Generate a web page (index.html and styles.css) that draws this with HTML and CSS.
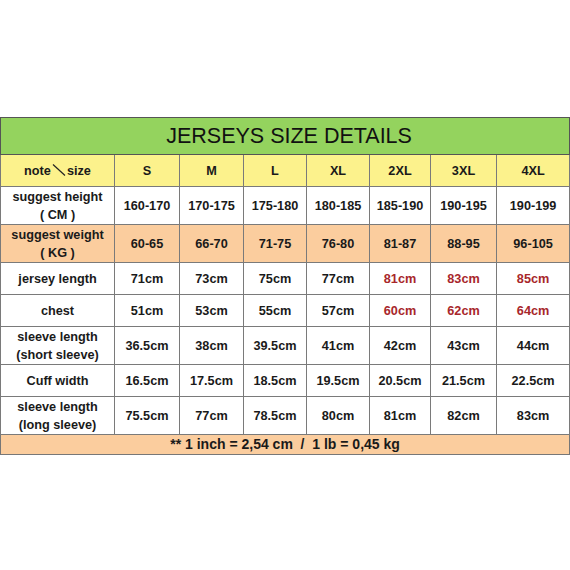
FILE: index.html
```html
<!DOCTYPE html>
<html>
<head>
<meta charset="utf-8">
<link rel="stylesheet" href="styles.css">
</head>
<body>
<div class="page">
<table class="sizes">
  <colgroup>
    <col class="c0"><col class="c1"><col class="c2"><col class="c3"><col class="c4"><col class="c5"><col class="c6"><col class="c7">
  </colgroup>
  <tr class="title"><td colspan="8">JERSEYS SIZE DETAILS</td></tr>
  <tr class="head">
    <td>note<svg class="slash" width="14" height="12" viewBox="0 0 14 12"><line x1="1" y1="0.5" x2="13" y2="11.5" stroke="#222" stroke-width="1.2"/></svg>size</td>
    <td>S</td><td>M</td><td>L</td><td>XL</td><td>2XL</td><td>3XL</td><td>4XL</td>
  </tr>
  <tr class="tall">
    <td>suggest height<br>( CM )</td>
    <td>160-170</td><td>170-175</td><td>175-180</td><td>180-185</td><td>185-190</td><td>190-195</td><td>190-199</td>
  </tr>
  <tr class="tall peach">
    <td>suggest weight<br>( KG )</td>
    <td>60-65</td><td>66-70</td><td>71-75</td><td>76-80</td><td>81-87</td><td>88-95</td><td>96-105</td>
  </tr>
  <tr class="short">
    <td>jersey length</td>
    <td>71cm</td><td>73cm</td><td>75cm</td><td>77cm</td><td class="red">81cm</td><td class="red">83cm</td><td class="red">85cm</td>
  </tr>
  <tr class="short">
    <td>chest</td>
    <td>51cm</td><td>53cm</td><td>55cm</td><td>57cm</td><td class="red">60cm</td><td class="red">62cm</td><td class="red">64cm</td>
  </tr>
  <tr class="tall">
    <td>sleeve length<br>(short sleeve)</td>
    <td>36.5cm</td><td>38cm</td><td>39.5cm</td><td>41cm</td><td>42cm</td><td>43cm</td><td>44cm</td>
  </tr>
  <tr class="short">
    <td>Cuff width</td>
    <td>16.5cm</td><td>17.5cm</td><td>18.5cm</td><td>19.5cm</td><td>20.5cm</td><td>21.5cm</td><td>22.5cm</td>
  </tr>
  <tr class="tall">
    <td>sleeve length<br>(long sleeve)</td>
    <td>75.5cm</td><td>77cm</td><td>78.5cm</td><td>80cm</td><td>81cm</td><td>82cm</td><td>83cm</td>
  </tr>
  <tr class="foot"><td colspan="8">** 1 inch = 2,54 cm &nbsp;/&nbsp; 1 lb = 0,45 kg</td></tr>
</table>
</div>
</body>
</html>
```
FILE: styles.css
```css
html, body {
  margin: 0;
  padding: 0;
  background: #ffffff;
}
.page {
  padding-top: 117px;
  padding-left: 0;
  width: 570px;
  height: 453px;
}
.sizes {
  border-collapse: collapse;
  table-layout: fixed;
  width: 569px;
  font-family: "Liberation Sans", Arial, sans-serif;
  font-weight: bold;
  font-size: 12.7px;
  color: #1a1a1a;
}
.c0 { width: 114px; }
.c1 { width: 65px; }
.c2 { width: 64px; }
.c3 { width: 63px; }
.c4 { width: 63px; }
.c5 { width: 61px; }
.c6 { width: 66px; }
.c7 { width: 73px; }
.sizes td {
  border: 1px solid #7a7a7a;
  text-align: center;
  vertical-align: middle;
  padding: 0;
  line-height: 18px;
  background: #ffffff;
}
.sizes tr.title td {
  background: #94d35e;
  height: 36px;
  font-weight: normal;
  font-size: 21.5px;
  color: #111;
  border-color: #555;
  padding-left: 8px;
}
.sizes tr.head td {
  background: #fcf28c;
  height: 31px;
}
.slash {
  display: inline-block;
  vertical-align: -1px;
  margin: 0 1px;
}
.sizes tr.tall td { height: 37px; }
.sizes tr.short td { height: 31px; }
.sizes tr.peach td { background: #fbcd9e; }
.sizes td.red { color: #a8272b; }
.sizes tr.foot td {
  background: #fbcd9e;
  height: 19px;
  font-size: 14px;
  line-height: 19px;
  border-color: #777;
}
```
